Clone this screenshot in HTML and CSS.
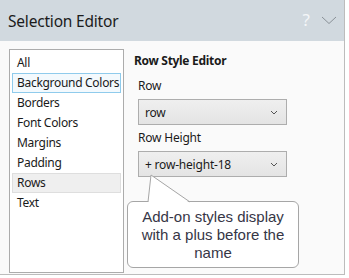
FILE: index.html
```html
<!DOCTYPE html>
<html>
<head>
<meta charset="utf-8">
<link rel="stylesheet" href="styles.css">
</head>
<body>
<div class="panel">
  <div class="header">
    <span class="title">Selection Editor</span>
    <span class="help">?</span>
    <svg class="chev" width="16" height="10" viewBox="0 0 16 10"><polyline points="1,2 8,8.5 15,2" fill="none" stroke="#8a9197" stroke-width="1"/></svg>
  </div>
  <div class="content">
    <div class="list">
      <div class="item">All</div>
      <div class="item sel">Background Colors</div>
      <div class="item">Borders</div>
      <div class="item">Font Colors</div>
      <div class="item">Margins</div>
      <div class="item">Padding</div>
      <div class="item hov">Rows</div>
      <div class="item">Text</div>
    </div>
    <div class="editor">
      <div class="heading">Row Style Editor</div>
      <div class="label">Row</div>
      <div class="select"><span>row</span><svg width="8" height="5" viewBox="0 0 8 5"><polyline points="1,1 4,4 7,1" fill="none" stroke="#555" stroke-width="1"/></svg></div>
      <div class="label">Row Height</div>
      <div class="select"><span>+ row-height-18</span><svg width="8" height="5" viewBox="0 0 8 5"><polyline points="1,1 4,4 7,1" fill="none" stroke="#555" stroke-width="1"/></svg></div>
    </div>
  </div>
  <div class="callout">Add-on styles display with a plus before the name</div>
  <svg class="tail" width="60" height="32" viewBox="0 0 60 32"><polygon points="11,1 8,29 50,29" fill="#fff"/><polyline points="8,28 11,1 50,28" fill="none" stroke="#a6a6a6" stroke-width="1"/></svg>
</div>
</body>
</html>
```
FILE: styles.css
```css
html, body { margin: 0; padding: 0; background: #fff; }
body { font-family: "Noto Sans", "Open Sans", sans-serif; color: #1a1a1a; }
.panel {
  position: relative;
  width: 344px;
  height: 274px;
  border-right: 1px solid #bcbcbc;
  border-bottom: 1px solid #bcbcbc;
  background: #fafafa;
  box-sizing: content-box;
}
.header {
  height: 41px;
  background: #d1d9df;
  display: flex;
  align-items: center;
  padding-left: 8px;
  box-sizing: border-box;
}
.title { font-size: 15.5px; color: #1b1b1b; flex: 1; letter-spacing: -0.2px; }
.help { color: #f4f6f8; font-size: 17px; margin-right: 11px; margin-top: -2px; }
.chev { margin-right: 7px; margin-top: -2px; }
.content { display: flex; padding: 8px 0 0 9px; }
.list {
  width: 115px;
  height: 224px;
  border: 1px solid #acacac;
  background: #fff;
  box-sizing: border-box;
  padding: 3px 2px 0 2px;
  font-size: 12px;
}
.item {
  height: 20px;
  line-height: 18px;
  padding-left: 4px;
  border: 1px solid transparent;
  box-sizing: border-box;
  white-space: nowrap;
  letter-spacing: -0.3px;
}
.item.sel { border-color: #8fcbec; background: #f3f9fd; }
.item.hov { border-color: #dedede; background: #efefef; }
.editor { padding-left: 10px; padding-top: 4px; font-size: 12px; }
.heading { font-weight: bold; font-size: 12px; height: 20px; line-height: 16px; letter-spacing: -0.3px; }
.label { margin-left: 4px; height: 18px; line-height: 18px; margin-top: 4px; letter-spacing: -0.2px; }
.label + .select { margin-top: 4px; }
.select {
  margin-left: 4px;
  width: 149px;
  height: 26px;
  border: 1px solid #adadad;
  background: linear-gradient(#efefef, #e4e4e4);
  box-sizing: border-box;
  display: flex;
  align-items: center;
  justify-content: space-between;
  padding: 0 8px 0 6px;
  letter-spacing: -0.2px;
}
.select svg { margin-top: 1px; }
.callout {
  position: absolute;
  left: 127px;
  top: 201px;
  width: 172px;
  height: 67px;
  box-sizing: border-box;
  border: 1px solid #a6a6a6;
  border-radius: 6px;
  background: #fff;
  font-family: "Liberation Sans", Arial, sans-serif;
  font-size: 15px;
  line-height: 18px;
  color: #363646;
  text-align: center;
  padding: 6px 10px 0 10px;
}
.tail { position: absolute; left: 140px; top: 174px; }
```
